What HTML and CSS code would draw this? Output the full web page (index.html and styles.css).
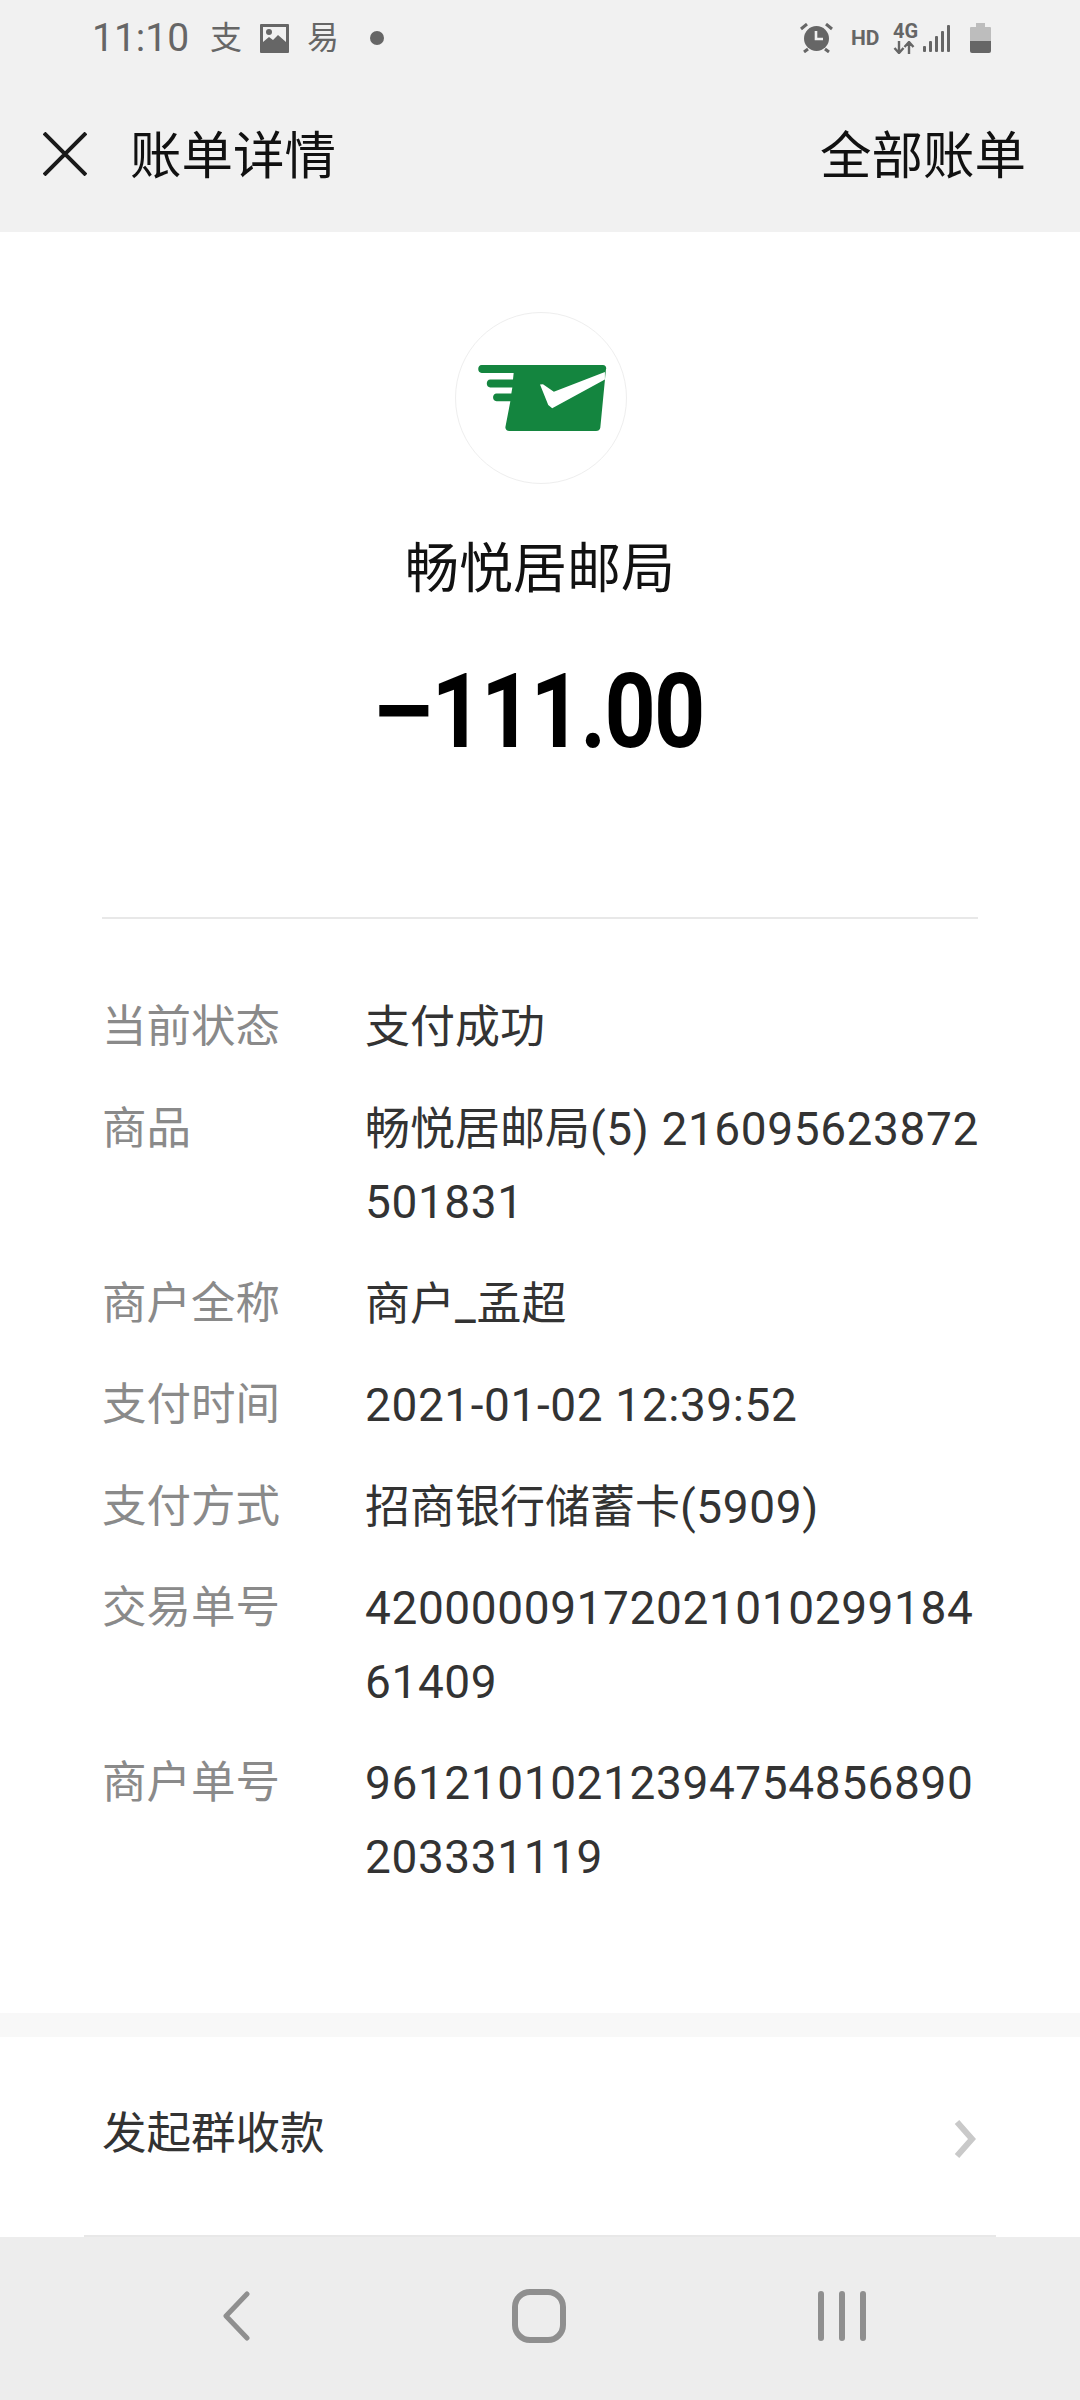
FILE: index.html
```html
<!DOCTYPE html>
<html lang="zh-CN">
<head>
    <meta charset="UTF-8">
    <meta name="viewport" content="width=device-width, initial-scale=1.0">
    <title>账单详情</title>
    <link rel="stylesheet" href="styles.css">
</head>
<body>

    <header class="top">
        <div class="status">
            <div class="status-left">
                <span class="time">11:10</span>
                <span class="app-glyph glyph-pay">支</span>
                <svg class="icon-pic" viewBox="0 0 29 29">
                    <path fill="#666" fill-rule="evenodd" d="M1 0h27a1 1 0 0 1 1 1v27a1 1 0 0 1-1 1H1a1 1 0 0 1-1-1V1a1 1 0 0 1 1-1zM3 3v15l6-5 4 3 5-5 8 7V3z"/>
                    <circle cx="9" cy="8" r="3" fill="#666"/>
                </svg>
                <span class="app-glyph glyph-yi">易</span>
                <span class="dot"></span>
            </div>
            <div class="status-right">
                <svg class="icon-alarm" viewBox="0 0 33 30">
                    <circle cx="16.500" cy="15.500" r="12.500" fill="#666"/>
                    <path d="M16 8v8h7" fill="none" stroke="#f1f1f1" stroke-width="2.600"/>
                    <path d="M1 6l6-5M32 6l-6-5M4 29l4-3M29 29l-4-3" fill="none" stroke="#666" stroke-width="3"/>
                </svg>
                <span class="hd">HD</span>
                <div class="net">
                    <span class="net-label">4G</span>
                    <svg class="icon-arrows" viewBox="0 0 22 13">
                        <path d="M6 0v11M1.500 7l4.500 5 4.500-5M16 13V2M11.500 6L16 1l4.500 5" fill="none" stroke="#666" stroke-width="2.400"/>
                    </svg>
                </div>
                <svg class="icon-signal" viewBox="0 0 27 27">
                    <rect x="0" y="21" width="3" height="6" rx="1" fill="#666"/>
                    <rect x="6" y="16" width="3" height="11" rx="1" fill="#666"/>
                    <rect x="12" y="11" width="3" height="16" rx="1" fill="#666"/>
                    <rect x="18" y="6" width="3" height="21" rx="1" fill="#666"/>
                    <rect x="24" y="0" width="3" height="27" rx="1" fill="#666"/>
                </svg>
                <svg class="icon-battery" viewBox="0 0 21 30">
                    <path fill="#bdbdbd" d="M6 0h9v4h5a1 1 0 0 1 1 1v13H0V5a1 1 0 0 1 1-1h5z"/>
                    <path fill="#666" d="M0 18h21v10a2 2 0 0 1-2 2H2a2 2 0 0 1-2-2z"/>
                </svg>
            </div>
        </div>
        <div class="titlebar">
            <div class="titlebar-left">
                <svg class="icon-close" viewBox="0 0 44 44">
                    <path d="M1 1l42 42M43 1L1 43" fill="none" stroke="#1a1a1a" stroke-width="4"/>
                </svg>
                <span class="title">账单详情</span>
            </div>
            <span class="all-bills">全部账单</span>
        </div>
    </header>

    <main class="bill">
        <section class="summary">
            <div class="logo">
                <svg class="logo-mail" viewBox="0 0 516 516">
                    <path fill="#14853f" d="M78 158h368c8 0 12 8 9 14l-17 176c-1 6-6 10-13 10H162c-8 0-13-6-12-12l15-78h-42c-14 0-14-24 0-24h45l3-18h-67c-14 0-14-24 0-24h69l2-20H78c-14 0-14-24 0-24z"/>
                    <path fill="#fff" d="M255 217l9-1 33 23 155-60v23L292 289l-12-10z"/>
                </svg>
            </div>
            <div class="merchant">畅悦居邮局</div>
            <div class="amount"><span class="minus">−</span>111.00</div>
        </section>

        <section class="details">
            <div class="row"><span class="label">当前状态</span><span class="value">支付成功</span></div>
            <div class="row"><span class="label">商品</span><span class="value">畅悦居邮局<span class="num">(5) 216095623872</span><br><span class="num">501831</span></span></div>
            <div class="row"><span class="label">商户全称</span><span class="value">商户<span class="num">_</span>孟超</span></div>
            <div class="row"><span class="label">支付时间</span><span class="value"><span class="num">2021-01-02 12:39:52</span></span></div>
            <div class="row"><span class="label">支付方式</span><span class="value">招商银行储蓄卡<span class="num">(5909)</span></span></div>
            <div class="row"><span class="label">交易单号</span><span class="value"><span class="num">42000009172021010299184</span><br><span class="num">61409</span></span></div>
            <div class="row"><span class="label">商户单号</span><span class="value"><span class="num">96121010212394754856890</span><br><span class="num">203331119</span></span></div>
        </section>

        <div class="band"></div>

        <section class="action">
            <span class="action-text">发起群收款</span>
            <svg class="icon-chevron" viewBox="0 0 24 38">
                <path d="M4 2l15 17L4 36" fill="none" stroke="#c9c9c9" stroke-width="6"/>
            </svg>
        </section>
    </main>

    <nav class="softkeys">
        <svg class="key-back" viewBox="0 0 28 50">
            <path d="M25 3L4 25l21 22" fill="none" stroke="#8f8f8f" stroke-width="5" stroke-linecap="round" stroke-linejoin="round"/>
        </svg>
        <svg class="key-home" viewBox="0 0 54 54">
            <rect x="3" y="3" width="48" height="48" rx="15" fill="none" stroke="#8f8f8f" stroke-width="6"/>
        </svg>
        <svg class="key-recent" viewBox="0 0 48 50">
            <path d="M3 3v44M24 3v44M45 3v44" fill="none" stroke="#8f8f8f" stroke-width="6" stroke-linecap="round"/>
        </svg>
    </nav>

</body>
</html>
```

FILE: styles.css
```css
* {
    box-sizing: border-box;
}
body {
    margin: 0;
    width: 1080px;
    height: 2400px;
    display: flex;
    flex-direction: column;
    overflow: hidden;
    background-color: #fff;
    font-family: Roboto, "Noto Sans CJK SC", sans-serif;
}

/* Barra de topo */
.top {
    height: 232px;
    background-color: #f1f1f1;
}
.status {
    height: 76px;
    padding: 0 89px 0 92px;
    display: flex;
    justify-content: space-between;
    align-items: center;
}
.status-left, .status-right {
    display: flex;
    align-items: center;
}
.time {
    font-size: 39px;
    color: #666;
    width: 118px;
}
.app-glyph {
    font-size: 32px;
    color: #666;
    line-height: 32px;
}
.glyph-pay {
    width: 50px;
}
.glyph-yi {
    width: 63px;
    margin-left: 18px;
}
.icon-pic {
    width: 29px;
    height: 29px;
}
.dot {
    width: 14px;
    height: 14px;
    border-radius: 50%;
    background-color: #666;
}
.icon-alarm {
    width: 33px;
    height: 30px;
    margin-right: 18px;
}
.hd {
    font-size: 21px;
    font-weight: 700;
    color: #666;
    width: 42px;
}
.net {
    width: 30px;
    display: flex;
    flex-direction: column;
    gap: 1px;
}
.net-label {
    font-size: 20px;
    line-height: 17px;
    font-weight: 700;
    color: #666;
}
.icon-arrows {
    width: 22px;
    height: 13px;
    display: block;
}
.icon-signal {
    width: 27px;
    height: 27px;
    margin-right: 20px;
}
.icon-battery {
    width: 21px;
    height: 30px;
}
.titlebar {
    height: 156px;
    padding: 0 54px 0 43px;
    display: flex;
    justify-content: space-between;
    align-items: center;
}
.titlebar-left {
    display: flex;
    align-items: center;
    gap: 43px;
}
.icon-close {
    width: 44px;
    height: 44px;
}
.title, .all-bills {
    font-size: 51.500px;
    color: #111;
    margin-bottom: 5px;
}

/* Conteudo */
.bill {
    flex: 1;
    display: flex;
    flex-direction: column;
}
.summary {
    margin: 0 102px;
    height: 687px;
    padding-top: 80px;
    display: flex;
    flex-direction: column;
    align-items: center;
    border-bottom: 2px solid #e8e8e8;
}
.logo {
    width: 172px;
    height: 172px;
    margin-left: 1px;
    border: 1px solid #eee;
    border-radius: 50%;
}
.logo-mail {
    width: 170px;
    height: 170px;
    display: block;
}
.merchant {
    margin-top: 54px;
    font-size: 54px;
    line-height: 64px;
    color: #111;
}
.amount {
    margin-top: 50px;
    font-size: 104px;
    line-height: 120px;
    font-weight: 700;
    letter-spacing: -2px;
    color: #000;
    transform: scaleX(0.86);
}
.minus {
    display: inline-block;
    margin: 0 6px 0 2px;
    transform: scaleX(1.3);
}
.details {
    height: 1094px;
    padding: 72px 102px 0;
    display: flex;
    flex-direction: column;
    gap: 28px;
}
.row {
    display: flex;
    font-size: 44.500px;
    line-height: 73.500px;
}
.label {
    width: 263px;
    flex-shrink: 0;
    color: #8a8a8a;
}
.value {
    font-size: 45px;
    color: #333;
    white-space: nowrap;
}
.num {
    font-size: 46px;
    line-height: 1;
    letter-spacing: 0.600px;
}
.band {
    height: 24px;
    background-color: #f8f8f8;
}
.action {
    flex: 1;
    margin: 0 84px;
    padding: 0 19px 14px 18px;
    display: flex;
    justify-content: space-between;
    align-items: center;
    border-bottom: 2px solid #e8e8e8;
}
.action-text {
    font-size: 44.500px;
    color: #333;
}
.icon-chevron {
    width: 24px;
    height: 38px;
    margin-top: 20px;
}

/* Navegacao do sistema */
.softkeys {
    height: 163px;
    padding: 0 0 6px 222px;
    display: flex;
    align-items: center;
    background-color: #ededed;
}
.key-back {
    width: 28px;
    height: 50px;
    margin-right: 262px;
}
.key-home {
    width: 54px;
    height: 54px;
    margin-right: 252px;
}
.key-recent {
    width: 48px;
    height: 50px;
}
```
